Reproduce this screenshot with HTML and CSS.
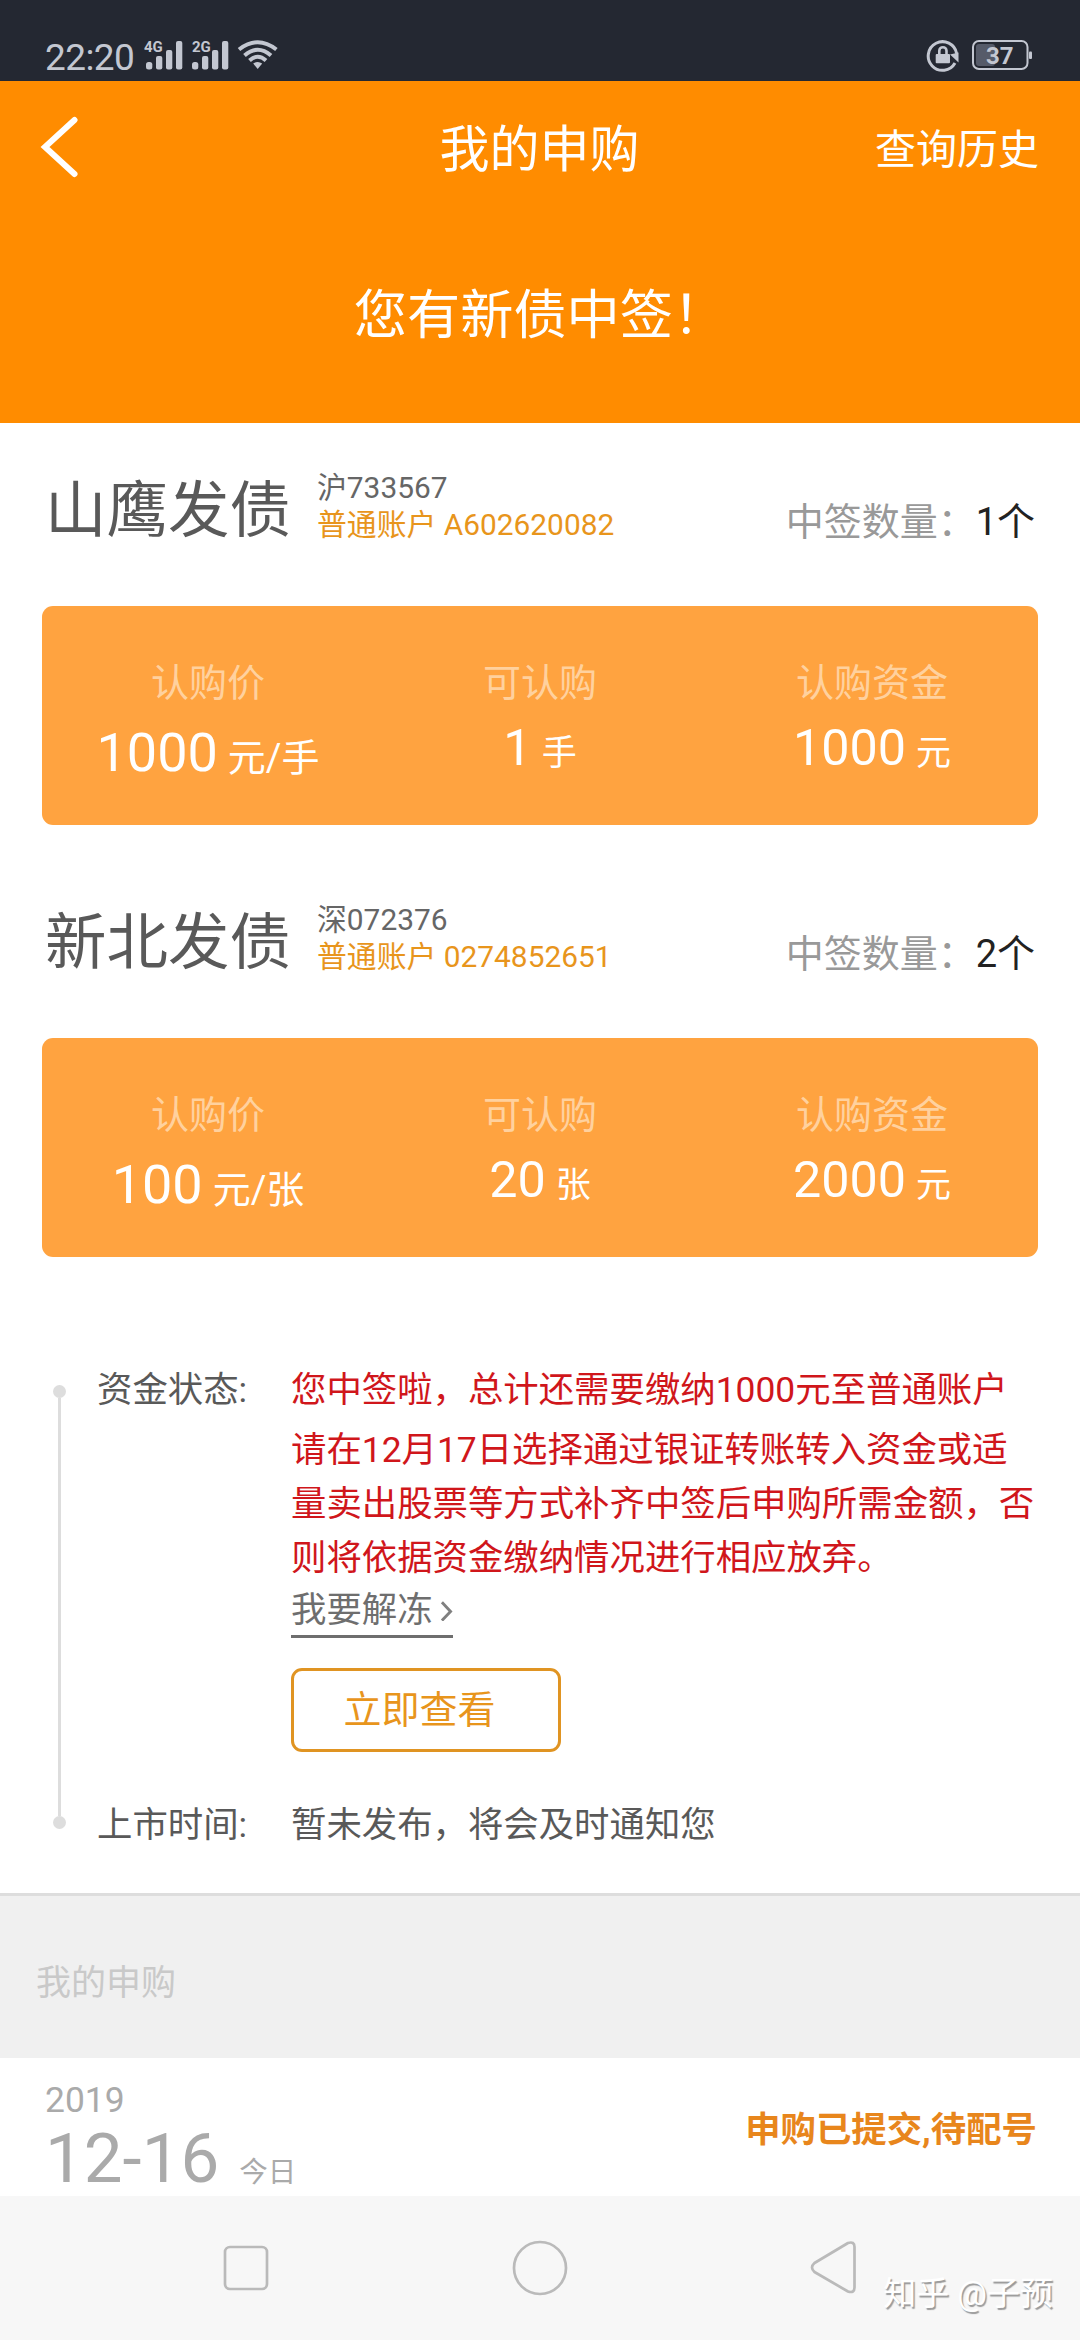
FILE: index.html
```html
<!DOCTYPE html>
<html lang="zh-CN">
<head>
<meta charset="utf-8">
<title>我的申购</title>
<link rel="stylesheet" href="styles.css">
</head>
<body>
<div class="status">
  <span class="clock">22:20</span>
  <svg class="signals" width="136" height="32" viewBox="0 0 136 32">
    <g fill="#c3c7d1">
      <rect x="2" y="21" width="6.300" height="7.500" rx="2.500"/>
      <rect x="12" y="15" width="6.300" height="13.500" rx="2"/>
      <rect x="22" y="9" width="6.300" height="19.500" rx="2"/>
      <rect x="32" y="0" width="6.300" height="28.500" rx="2"/>
      <rect x="48" y="21" width="6.300" height="7.500" rx="2.500"/>
      <rect x="58" y="15" width="6.300" height="13.500" rx="2"/>
      <rect x="68" y="9" width="6.300" height="19.500" rx="2"/>
      <rect x="78" y="0" width="6.300" height="28.500" rx="2"/>
      <path d="M109.200 22.500Q113.700 19.500 118.200 22.500L113.700 28Z"/>
      <text x="0" y="11" class="net">4G</text>
      <text x="48" y="11" class="net">2G</text>
    </g>
    <g fill="none" stroke="#c3c7d1" stroke-width="4">
      <path d="M95 8.500Q113.700 -6 132.400 8.500"/>
      <path d="M100.500 14.500Q113.700 3 127 14.500"/>
      <path d="M105.500 19.500Q113.700 12 122 19.500"/>
    </g>
  </svg>
  <svg class="power" width="108" height="36" viewBox="0 0 108 36">
    <path d="M30.600 15.500A14.300 14.300 0 1 0 29 25" fill="none" stroke="#c3c7d1" stroke-width="3"/>
    <path d="M24 16.500L32.500 14.500V24.500Z" fill="#c3c7d1"/>
    <rect x="9.700" y="16" width="14.300" height="9.200" rx="1" fill="#c3c7d1"/>
    <path d="M13.300 17V12.800a3.600 3.600 0 0 1 7.200 0V17" fill="none" stroke="#c3c7d1" stroke-width="2.600"/>
    <rect x="50" y="6" width="19" height="22" rx="3" fill="#565b69"/>
    <rect x="47" y="3" width="54.500" height="28" rx="6" fill="none" stroke="#c3c7d1" stroke-width="2"/>
    <rect x="103" y="13.500" width="3" height="7.500" rx="1" fill="#c3c7d1"/>
    <text x="60" y="25.500" class="level">37</text>
  </svg>
</div>

<header class="hero">
  <nav class="bar">
    <svg class="back" width="40" height="66" viewBox="0 0 40 66"><path d="M34.500 4L5 31L34.500 58" fill="none" stroke="#fff" stroke-width="6" stroke-linecap="round"/></svg>
    <h1 class="title">我的申购</h1>
    <span class="history">查询历史</span>
  </nav>
  <p class="notice">您有新债中签！</p>
</header>

<main>
  <section class="bond">
    <div class="head">
      <h2 class="name">山鹰发债</h2>
      <div class="ids"><div>沪733567</div><div class="account">普通账户 A602620082</div></div>
      <div class="count">中签数量：<b>1个</b></div>
    </div>
    <div class="card">
      <div class="cell big"><span class="label">认购价</span><span class="value">1000<i>元/手</i></span></div>
      <div class="cell"><span class="label">可认购</span><span class="value">1<i>手</i></span></div>
      <div class="cell"><span class="label">认购资金</span><span class="value">1000<i>元</i></span></div>
    </div>
  </section>
  <section class="bond">
    <div class="head">
      <h2 class="name">新北发债</h2>
      <div class="ids"><div>深072376</div><div class="account">普通账户 0274852651</div></div>
      <div class="count">中签数量：<b>2个</b></div>
    </div>
    <div class="card">
      <div class="cell big"><span class="label">认购价</span><span class="value">100<i>元/张</i></span></div>
      <div class="cell"><span class="label">可认购</span><span class="value">20<i>张</i></span></div>
      <div class="cell"><span class="label">认购资金</span><span class="value">2000<i>元</i></span></div>
    </div>
  </section>

  <section class="progress">
    <div class="rail"><span class="dot"></span><span class="line"></span><span class="dot"></span></div>
    <div class="steps">
      <div class="step">
        <span class="key">资金状态:</span>
        <div class="detail">
          <p class="warn first">您中签啦，总计还需要缴纳1000元至普通账户</p>
          <p class="warn">请在12月17日选择通过银证转账转入资金或适<br>量卖出股票等方式补齐中签后申购所需金额，否<br>则将依据资金缴纳情况进行相应放弃。</p>
          <a class="unfreeze">我要解冻<svg width="14" height="22" viewBox="0 0 14 22"><path d="M2 3L11 12.500L2 22" fill="none" stroke="#808080" stroke-width="3"/></svg></a>
          <div class="button">立即查看</div>
        </div>
      </div>
      <div class="step">
        <span class="key">上市时间:</span>
        <div class="detail">暂未发布，将会及时通知您</div>
      </div>
    </div>
  </section>

  <div class="divider">我的申购</div>

  <section class="record">
    <div>
      <div class="year">2019</div>
      <div class="day">12-16<span class="today">今日</span></div>
    </div>
    <strong class="state">申购已提交,待配号</strong>
  </section>
</main>

<footer class="keys">
  <svg width="1080" height="144" viewBox="0 0 1080 144">
    <g fill="none" stroke="#bababa" stroke-width="2.700" stroke-linejoin="round">
      <rect x="225" y="51" width="42" height="42" rx="5"/>
      <circle cx="540" cy="72" r="26"/>
      <path d="M848 47L814.500 67Q809.500 71.500 814.500 76L848 95.500Q854.500 97.500 854.500 91.500V51Q854.500 45 848 47Z"/>
    </g>
  </svg>
  <span class="mark">知乎 @子预</span>
</footer>
</body>
</html>
```
FILE: styles.css
```css
* { box-sizing: border-box; margin: 0; padding: 0; }
body {
  width: 1080px;
  height: 2340px;
  overflow: hidden;
  background: #fff;
  color: #595959;
  font-family: Roboto, "Noto Sans CJK SC", sans-serif;
  font-size: 35.4px;
}
h1, h2, b, i { font-weight: 400; font-style: normal; }

.status {
  display: flex;
  align-items: flex-start;
  height: 81px;
  padding: 0 46px 0 45px;
  background: #242832;
  color: #c3c7d1;
}
.clock { width: 99px; margin-top: 36px; font-size: 37px; line-height: 43px; letter-spacing: -0.6px; }
.signals { margin-top: 41px; overflow: visible; }
.power { margin: 38px 0 0 auto; }
.net { font: 700 15px Roboto, sans-serif; }
.level { font: 700 24px Roboto, sans-serif; fill: #c3c7d1; }

.hero { height: 342px; background: #ff8c00; color: #fff; }
.bar {
  display: grid;
  grid-template-columns: 1fr auto 1fr;
  align-items: center;
  height: 136px;
  padding: 0 41px 0 40px;
}
.title { padding-top: 2px; font-size: 50px; line-height: 60px; }
.history { justify-self: end; padding-top: 2px; font-size: 41px; line-height: 50px; }
.notice { margin-top: 63px; text-align: center; font-size: 53.200px; line-height: 72px; }

.bond { height: 432px; padding: 0 42px; }
.head { display: flex; height: 183px; padding: 47px 3px 0 3px; }
.name { width: 272px; margin-top: 1px; font-size: 61.500px; line-height: 80px; }
.ids { font-size: 29.850px; line-height: 36.500px; color: #666; }
.account { color: #e8951c; }
.count { margin: 27px 0 0 auto; font-size: 38px; line-height: 50px; color: #999; }
.count b { color: #222; }
.card {
  display: grid;
  grid-template-columns: repeat(3, 1fr);
  height: 219px;
  padding-top: 52px;
  border-radius: 11px;
  background: #ffa340;
}
.cell { display: flex; flex-direction: column; align-items: center; color: #fff; }
.label { font-size: 38px; line-height: 50px; color: #ffd19e; }
.value { margin-top: 5px; font-size: 50.300px; line-height: 70px; }
.value i { margin-left: 10px; font-size: 35px; }
.big .value { margin-top: 10px; font-size: 54px; }
.big i { font-size: 38px; }

.progress { display: flex; height: 606px; padding: 98px 40px 0 53px; }
.rail { display: flex; flex-direction: column; align-items: center; width: 13px; height: 444px; margin-right: 31px; }
.dot { width: 13px; height: 13px; border-radius: 50%; background: #ddd; }
.line { flex: 1; width: 3px; background: #ddd; }
.steps { flex: 1; margin-top: -22px; }
.step { display: flex; line-height: 54px; white-space: nowrap; }
.step:first-child { height: 435px; }
.key { width: 194px; }
.detail { flex: 1; }
.warn { color: #d0161b; }
.first { margin-bottom: 6px; }
.unfreeze {
  display: flex;
  align-items: center;
  gap: 7px;
  width: 162px;
  height: 53px;
  border-bottom: 3px solid #6e6e6e;
  color: #6e6e6e;
}
.button {
  width: 270px;
  height: 84px;
  margin-top: 30px;
  padding-right: 13px;
  border: 3px solid #e09422;
  border-radius: 11px;
  color: #e8951c;
  font-size: 38px;
  line-height: 78px;
  text-align: center;
}

.divider {
  height: 165px;
  padding-left: 36px;
  border-top: 3px solid #ddd;
  background: #f0f0f0;
  color: #c9c9c9;
  font-size: 35px;
  line-height: 176px;
}
.record {
  display: flex;
  justify-content: space-between;
  height: 138px;
  padding: 21px 43px 0 45px;
  color: #aaa;
}
.year { line-height: 42px; }
.day { font-size: 69px; line-height: 75px; }
.today { margin-left: 20px; font-size: 28.500px; }
.state { margin-top: 26px; color: #e8861c; line-height: 50px; }

.keys { position: relative; height: 144px; background: #f7f7f7; }
.keys svg { display: block; }
.mark {
  position: absolute;
  right: 27px;
  bottom: 24px;
  color: #fff;
  font-size: 33px;
  line-height: 44px;
  text-shadow: 1.500px 1.500px 1px #999;
}
```
